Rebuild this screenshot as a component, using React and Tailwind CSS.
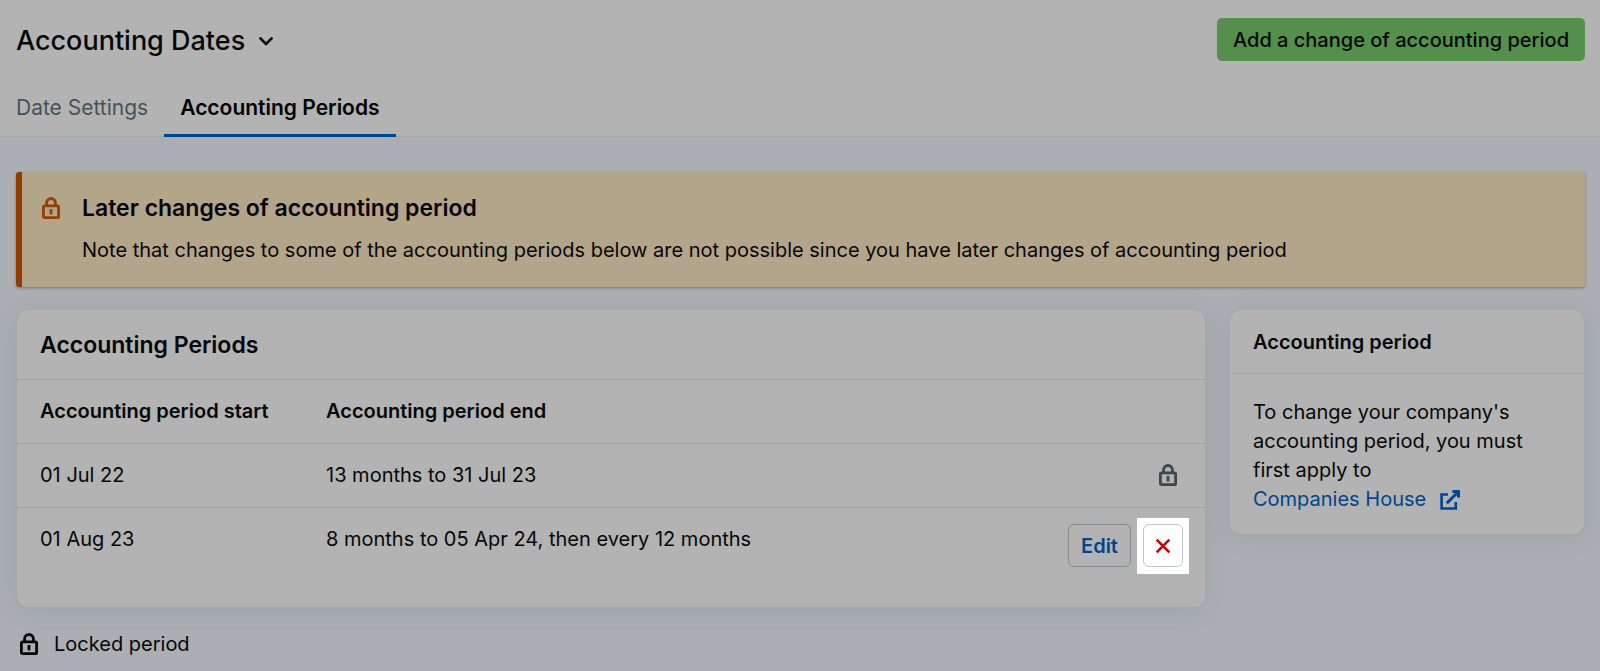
import React from "react";

function LockIcon({ className }) {
  return (
    <svg viewBox="0 0 18 22" className={className} fill="none" stroke="currentColor" strokeWidth="2.8" aria-hidden="true">
      <rect x="1.4" y="8.9" width="15.2" height="11.7" rx="1.2" />
      <path d="M4.6 8.7V5.8a4.4 4.3 0 0 1 8.8 0v2.9" />
      <path d="M9 12v5.4" strokeWidth="2.8" />
    </svg>
  );
}

function ExternalIcon({ className }) {
  return (
    <svg viewBox="0 0 20 20" className={className} fill="none" stroke="currentColor" strokeWidth="2.6" aria-hidden="true">
      <path d="M8 4.5H1.6v14h14.2V12" />
      <path d="M6.8 13.2 17 3" strokeWidth="3" />
      <path d="M12.4 1.5h6.1v6.1" strokeWidth="3" />
    </svg>
  );
}

const cell = "px-[23px] text-left align-top font-normal";

export default function App() {
  return (
    <div className="min-h-screen bg-[#abafb4] font-['Inter',sans-serif] text-xl leading-7 text-[#050708]">
      <header className="border-b border-[#a4a6ab] bg-[#b3b3b3]">
        <div className="flex items-start justify-between pl-4 pr-[15px] pt-[18px]">
          <h1 className="text-[27px] font-medium leading-[46px]">
            <button type="button" className="flex items-center gap-3.5">
              Accounting Dates
              <svg viewBox="0 0 14 9" className="h-[9px] w-3.5" fill="none" stroke="currentColor" strokeWidth="2.6" strokeLinecap="round" strokeLinejoin="round" aria-hidden="true">
                <path d="M1.4 1.4 7 7l5.6-5.6" />
              </svg>
            </button>
          </h1>
          <button type="button" className="h-[43px] rounded-[5px] bg-[#548f4b] px-4 font-medium">
            Add a change of accounting period
          </button>
        </div>
        <nav className="-mb-px flex h-[73px] items-stretch text-[21px]">
          <a href="#settings" className="flex items-center px-4 pt-[14px] text-[#46525a]">Date Settings</a>
          <a href="#periods" aria-current="page" className="flex items-center border-b-3 border-[#00458f] px-4 pt-[17px] font-semibold text-black">Accounting Periods</a>
        </nav>
      </header>

      <main className="pl-4 pr-[15px] pt-[35px]">
        <section className="flex gap-[22px] rounded-[3px] border-l-6 border-[#8f3e00] bg-[#b3a589] py-5 pl-5 pr-6 shadow-[0_1px_3px_rgba(0,0,0,0.35)]">
          <LockIcon className="mt-[5px] h-[22px] w-[18px] shrink-0 text-[#973f00]" />
          <div>
            <h2 className="text-[23px] font-semibold leading-8">Later changes of accounting period</h2>
            <p className="pt-3 pb-[3px]">
              Note that changes to some of the accounting periods below are not possible since you have later changes of accounting period
            </p>
          </div>
        </section>

        <div className="mt-[22px] flex items-start gap-[23px]">
          <section className="min-w-0 flex-1 overflow-hidden rounded-xl border border-[#a3a7ac] bg-[#b3b3b3] shadow-[0_4px_24px_rgba(60,80,100,0.12)]">
            <h2 className="border-b border-[#a0a2a5] px-[23px] pt-[19px] pb-[18px] text-[23px] font-semibold leading-8">Accounting Periods</h2>
            <table className="w-full table-fixed border-collapse">
              <colgroup>
                <col className="w-[286px]" />
                <col />
                <col className="w-[186px]" />
              </colgroup>
              <thead>
                <tr className="h-[63px] border-b border-[#a0a1a8]">
                  <th scope="col" className="px-[23px] text-left font-semibold">Accounting period start</th>
                  <th scope="col" className="px-[23px] text-left font-semibold">Accounting period end</th>
                  <td />
                </tr>
              </thead>
              <tbody>
                <tr className="h-16 border-b border-[#a0a1a8]">
                  <td className={cell + " pt-[17px]"}>01 Jul 22</td>
                  <td className={cell + " pt-[17px]"}>13 months to 31 Jul 23</td>
                  <td className="pr-7 align-middle">
                    <LockIcon className="ml-auto h-[22px] w-[18px] text-[#3b464d]" />
                  </td>
                </tr>
                <tr className="h-[100px]">
                  <td className={cell + " pt-[17px]"}>01 Aug 23</td>
                  <td className={cell + " pt-[17px]"}>8 months to 05 Apr 24, then every 12 months</td>
                  <td className="pr-4 pt-2.5 align-top">
                    <div className="flex items-center justify-end gap-1.5">
                      <button type="button" className="h-[43px] w-[63px] rounded-md border border-[#858c90] font-semibold text-[#00458f]">Edit</button>
                      <div className="flex h-14 w-[52px] items-center justify-center bg-white">
                        <button type="button" aria-label="Delete" className="flex h-[43px] w-10 items-center justify-center rounded-md border border-[#c0c8cf] bg-white text-[#d20000]">
                          <svg viewBox="0 0 14 14" className="size-3.5" fill="none" stroke="currentColor" strokeWidth="2.6" aria-hidden="true">
                            <path d="M.6.6l12.8 12.8M13.4.6.6 13.4" />
                          </svg>
                        </button>
                      </div>
                    </div>
                  </td>
                </tr>
              </tbody>
            </table>
          </section>

          <aside className="w-[356px] shrink-0 rounded-xl border border-[#a3a7ac] bg-[#b3b3b3] shadow-[0_4px_24px_rgba(60,80,100,0.12)]">
            <h2 className="border-b border-[#a0a2a5] px-[23px] pt-[18px] pb-[17px] font-semibold">Accounting period</h2>
            <p className="px-[23px] pt-6 pb-5 leading-[29px]">
              To change your company's accounting period, you must first apply to{" "}
              <a href="#companies-house" className="flex items-center gap-3.5 text-[#00458f]">
                Companies House
                <ExternalIcon className="size-5" />
              </a>
            </p>
          </aside>
        </div>

        <p className="flex items-center gap-4 pt-[22px] pl-1">
          <LockIcon className="h-[22px] w-[18px]" />
          Locked period
        </p>
      </main>
    </div>
  );
}
